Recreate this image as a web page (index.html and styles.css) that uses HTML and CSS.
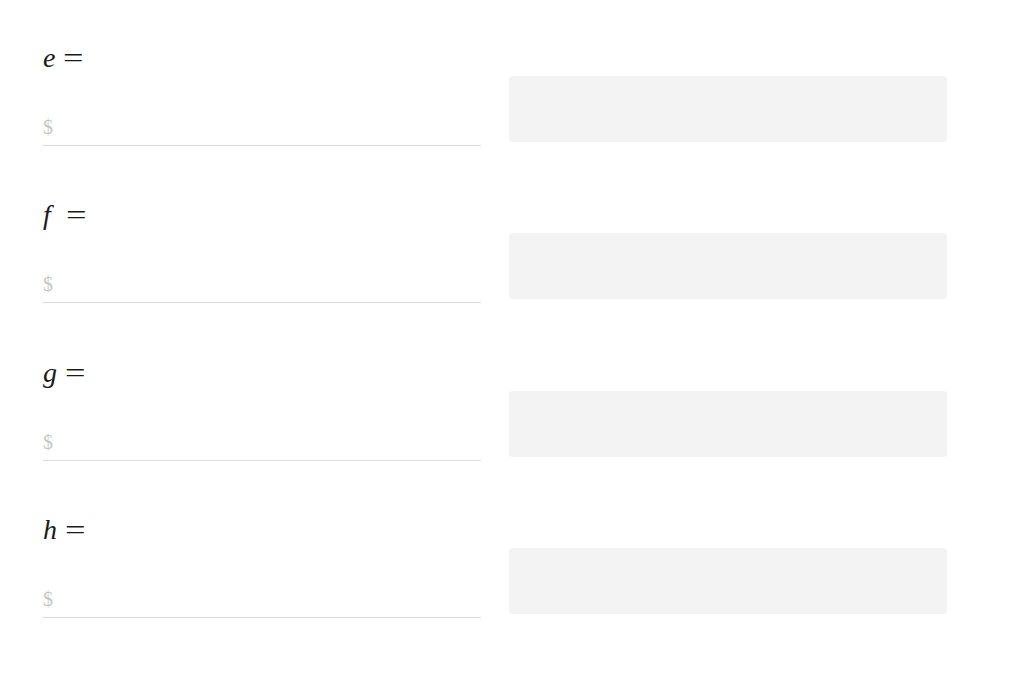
FILE: index.html
```html
<!DOCTYPE html>
<html lang="en">
<head>
<meta charset="utf-8">
<title>Variables</title>
<link rel="stylesheet" href="styles.css">
</head>
<body>
<main class="page">
  <section class="row">
    <div class="field">
      <div class="label"><span class="var">e</span><span class="eq">=</span></div>
      <div class="input"><span class="prefix">$</span></div>
    </div>
    <div class="box"></div>
  </section>
  <section class="row">
    <div class="field">
      <div class="label"><span class="var var-wide">f</span><span class="eq">=</span></div>
      <div class="input"><span class="prefix">$</span></div>
    </div>
    <div class="box"></div>
  </section>
  <section class="row">
    <div class="field">
      <div class="label"><span class="var">g</span><span class="eq">=</span></div>
      <div class="input"><span class="prefix">$</span></div>
    </div>
    <div class="box"></div>
  </section>
  <section class="row">
    <div class="field">
      <div class="label"><span class="var">h</span><span class="eq">=</span></div>
      <div class="input"><span class="prefix">$</span></div>
    </div>
    <div class="box"></div>
  </section>
</main>
</body>
</html>
```
FILE: styles.css
```css
html, body {
  margin: 0;
  padding: 0;
  background: #ffffff;
}
.page {
  padding: 40px 43px 0 43px;
}
.row {
  display: grid;
  grid-template-columns: 438px 438px;
  column-gap: 28px;
  align-items: end;
  height: 106px;
  margin-bottom: 51px;
}
.row:nth-child(2) {
  margin-bottom: 52px;
}
.field {
  display: flex;
  flex-direction: column;
  justify-content: space-between;
  height: 106px;
}
.label {
  height: 36px;
  line-height: 36px;
  font-family: "Liberation Serif", serif;
  font-size: 28px;
  color: #1a1a1a;
  white-space: nowrap;
}
.var {
  font-style: italic;
}
.var-wide {
  margin-right: 7px;
}
.eq {
  display: inline-block;
  margin-left: 8px;
  transform: scaleX(1.3);
  transform-origin: left center;
}
.input {
  height: 30px;
  border-bottom: 1px solid #dcdcdc;
  display: flex;
  align-items: flex-end;
  padding-bottom: 8px;
  box-sizing: border-box;
}
.prefix {
  font-family: "Liberation Serif", serif;
  font-size: 20px;
  line-height: 20px;
  color: #c6c6c6;
}
.box {
  height: 66px;
  margin-bottom: 4px;
  background: #f3f3f3;
  border-radius: 4px;
}
```
